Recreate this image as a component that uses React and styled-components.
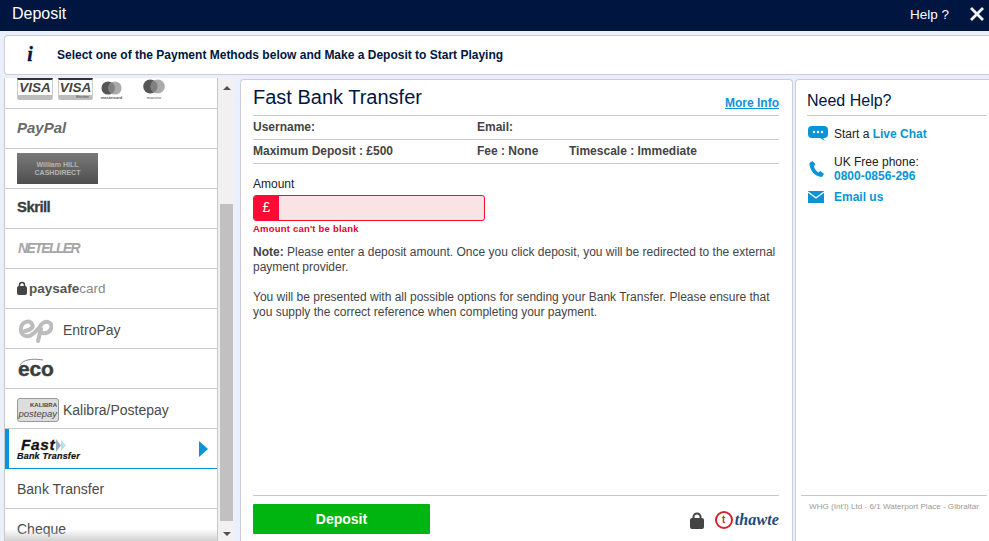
import React from 'react';
import styled, { createGlobalStyle } from 'styled-components';

const Global = createGlobalStyle`
  html, body { margin: 0; padding: 0; background: #eaf0fb; }
  body { font-family: "Liberation Sans", Arial, sans-serif; }
  * { box-sizing: border-box; }
`;

const Page = styled.div`
  width: 989px; height: 541px; overflow: hidden;
  display: flex; flex-direction: column; background: #eaf0fb;
`;
const Header = styled.header`
  height: 31px; flex: none; background: #001641; color: #fff;
  display: flex; align-items: center; justify-content: space-between;
  padding: 0 4px 3px 12px;
`;
const HeaderTitle = styled.div` font-size: 16px; `;
const HeaderRight = styled.div` display: flex; align-items: center; gap: 20px; `;
const HelpLink = styled.span` font-size: 13.5px; `;
const InfoBar = styled.div`
  height: 40px; flex: none; margin: 4px 0 3px 4px; background: #fff;
  border: 1px solid #ccd; border-right: none; border-radius: 4px 0 0 4px;
  display: flex; align-items: center; color: #001641;
  font-size: 12px; font-weight: bold; padding-bottom: 1px;
`;
const InfoIcon = styled.span`
  width: 52px; padding-right: 2px; text-align: center; font-family: "Liberation Serif", serif;
  font-style: italic; font-size: 20px; font-weight: bold; -webkit-text-stroke: .4px #001641;
`;
const Columns = styled.div`
  flex: 1; min-height: 0; display: flex; padding-left: 4px;
`;
const Sidebar = styled.div`
  width: 230px; height: 463px; flex: none; position: relative; display: flex; overflow: hidden;
`;
const List = styled.div`
  width: 214px; flex: none; background: #fff; border: 1px solid #c8c8c8;
  border-width: 0 1px 0 1px; overflow: hidden;
`;
const Row = styled.div`
  height: ${p => p.$h || 40}px; display: flex; align-items: center; position: relative;
  padding-left: ${p => p.$active ? 8 : 12}px; color: #4a4a4a; font-size: 14px;
  border-bottom: 1px solid ${p => p.$active ? '#0a94d6' : '#c8c8c8'};
  border-left: ${p => p.$active ? '4px solid #0a94d6' : 'none'};
`;
const RowLabel = styled.span` margin-left: ${p => p.$ml || 0}px; margin-top: 2px; `;
const ActiveArrow = styled.span`
  position: absolute; right: 9px; top: 12px; width: 0; height: 0;
  border-left: 9px solid #0a94d6; border-top: 8px solid transparent; border-bottom: 8px solid transparent;
`;
const CardRow = styled.div` display: flex; align-items: flex-start; height: 100%; `;
const Visa = styled.span`
  position: relative; width: ${p => p.$w}px; height: 22px; margin-right: 5px; background: linear-gradient(#fff 0 15px, #bdbdbd 15px);
  border-top: 2px solid #333; border-radius: 0 0 2px 2px;
  font: italic bold 13.5px "Liberation Sans", sans-serif; color: #444; text-align: center; line-height: 15px;
  border-left: 1px solid #ccc; border-right: 1px solid #ccc;
`;
const Electron = styled.span`
  position: absolute; right: 3px; top: 15px; font: 3.5px/4px "Liberation Sans", sans-serif; color: #444;
`;
const McWrap = styled.span`
  display: flex; flex-direction: column; align-items: center; width: ${p => p.$w}px; margin: ${p => p.$mt}px 0 0 ${p => p.$ml}px;
`;
const McLabel = styled.span` font: ${p => p.$bold ? 'bold' : 'normal'} 4px/4px "Liberation Sans", sans-serif; color: #555; margin-top: ${p => p.$gap}px; `;
const PayPal = styled.span` font: italic bold 15px "Liberation Sans", sans-serif; color: #6a6a6a; margin-top: -2px; `;
const WillHill = styled.span`
  width: 81px; height: 31px; background: linear-gradient(#7a7a7a, #4e4e4e); color: #b5b5b5;
  font-size: 7px; font-weight: bold; text-align: center; padding-top: 8px; line-height: 8px;
`;
const Skrill = styled.span` font-size: 15px; font-weight: bold; color: #3c3c3c; letter-spacing: -0.6px; margin-top: -4px; -webkit-text-stroke: .3px #3c3c3c; `;
const Neteller = styled.span` font: italic bold 14px "Liberation Sans", sans-serif; color: #a5a5a5; letter-spacing: -1.6px; margin-left: 1px; margin-top: -2px; `;
const Paysafe = styled.span` font-size: 13.5px; color: #555; font-weight: bold; display: flex; align-items: center; gap: 2px; `;
const Light = styled.span` font-weight: normal; color: #888; `;
const Eco = styled.span`
  position: relative; font-size: 21px; line-height: 20px; font-weight: bold; color: #3c3c3c; letter-spacing: -0.2px; margin-left: 1px; margin-top: 1px;
  -webkit-text-stroke: .4px #3c3c3c;
`;
const EcoSwoosh = styled.svg` position: absolute; left: 1px; top: -1px; `;
const Kalibra = styled.span`
  width: 42px; height: 24px; border: 1px solid #999; border-radius: 3px; background: #ddd; color: #444; margin-top: 2px;
  font-size: 6px; font-weight: bold; line-height: 7px; display: flex; flex-direction: column; align-items: flex-end; padding: 3px 1px 0 0;
`;
const KalibraSub = styled.i` font-size: 9.5px; font-weight: normal; line-height: 9px; `;
const FastLogo = styled.span` display: flex; flex-direction: column; color: #111; font-style: italic; font-weight: bold; margin-top: 2px; `;
const FastTop = styled.span`
  font-size: 15.5px; line-height: 14px; letter-spacing: 0.6px; display: flex; align-items: center; gap: 0; margin-left: 4px;
  -webkit-text-stroke: .3px #111;
`;
const FastSub = styled.span` font-size: 9px; line-height: 9px; letter-spacing: 0.2px; -webkit-text-stroke: .2px #111; `;
const Track = styled.div`
  width: 16px; flex: none; background: #f1f1f1; position: relative;
`;
const Thumb = styled.div`
  position: absolute; left: 2px; top: 126px; width: 13px; height: 317px; background: #c1c1c1;
`;
const ArrowUp = styled.span`
  position: absolute; left: 5px; top: 8px; width: 0; height: 0;
  border: 4px solid transparent; border-top: 0; border-bottom: 4px solid #505050;
`;
const ArrowDown = styled.span`
  position: absolute; left: 5px; bottom: 5px; width: 0; height: 0;
  border: 4px solid transparent; border-bottom: 0; border-top: 4px solid #505050;
`;
const BottomFade = styled.div`
  position: absolute; left: 1px; width: 212px; bottom: 0; height: 12px;
  background: linear-gradient(rgba(200,200,200,0), rgba(200,200,200,.85));
`;
const Main = styled.main`
  width: 553px; height: 463px; margin: 1px 0 0 6px; flex: none; background: #fff; border: 1px solid #ccd;
  border-bottom: none; border-radius: 4px 4px 0 0; padding: 0 13px 0 12px; display: flex; flex-direction: column;
  color: #333;
`;
const TitleRow = styled.div`
  height: 36px; flex: none; display: flex; justify-content: space-between; border-bottom: 1px solid #c8c8c8;
`;
const Title = styled.h1`
  margin: 5px 0 0; font-size: 20px; font-weight: normal; color: #001641; line-height: 24px;
`;
const MoreInfo = styled.a`
  margin-top: 16px; font-size: 12px; font-weight: bold; color: #0a94d6; text-decoration: underline;
`;
const InfoRow = styled.div`
  height: 24px; flex: none; display: flex; align-items: center; border-bottom: 1px solid #c8c8c8;
  font-size: 12px; font-weight: bold; color: #444; padding-bottom: 1px;
`;
const Cell = styled.span` width: ${p => p.$w}px; flex: none; `;
const AmountLabel = styled.label` margin-top: 13px; font-size: 12px; color: #222; line-height: 14px; `;
const AmountField = styled.div`
  margin-top: 4px; width: 232px; height: 26px; border: 1px solid #ff0a35; border-radius: 3px;
  background: #fae3e5; display: flex; overflow: hidden;
`;
const Currency = styled.span`
  width: 25px; background: #ff0a35; color: #fff; font-size: 14px; text-align: center; line-height: 22px;
`;
const ErrorText = styled.div` margin-top: 2px; font-size: 9.5px; font-weight: bold; color: #e8002d; letter-spacing: .2px; line-height: 12px; `;
const Copy = styled.p`
  margin: ${p => p.$mt}px 0 0; font-size: 12px; line-height: 15px; color: #444;
`;
const Spacer = styled.div` flex: 1; `;
const Footer = styled.div`
  height: 47px; flex: none; border-top: 1px solid #c8c8c8; display: flex; align-items: flex-start; justify-content: space-between;
  padding-top: 8px;
`;
const DepositBtn = styled.button`
  width: 177px; height: 30px; border: none; background: #00b50f; color: #fff; border-radius: 1px;
  font: bold 14px "Liberation Sans", sans-serif;
`;
const Secure = styled.div` display: flex; align-items: center; margin-top: 7px; gap: 11px; `;
const Thawte = styled.span` display: flex; align-items: center; gap: 2px; font: italic bold 16px "Liberation Serif", serif; color: #1c4a80; letter-spacing: 0.1px; `;
const ThawteMark = styled.span`
  width: 18px; height: 18px; border-radius: 50%; border: 2.5px solid #d8232f; color: #d8232f;
  font: bold 10px "Liberation Sans", sans-serif; text-align: center; line-height: 13px;
`;
const Help = styled.aside`
  width: 195px; height: 463px; margin: 1px 0 0 2px; flex: none; background: #fff; border: 1px solid #ccd;
  border-width: 1px 0 0 1px; border-radius: 4px 0 0 0; padding: 0 3px 0 11px; display: flex; flex-direction: column;
`;
const HelpTitle = styled.h2`
  margin: 0; height: 36px; flex: none; font-size: 16px; font-weight: normal; color: #001641; padding-top: 11px; line-height: 20px;
  border-bottom: 1px solid #c8c8c8;
`;
const HelpRow = styled.div`
  display: flex; align-items: center; margin-top: ${p => p.$mt}px; font-size: 12px; color: #222; line-height: 14px;
`;
const HelpIcon = styled.span` width: 27px; flex: none; display: flex; align-items: center; padding-left: 1px; `;
const Blue = styled.span` color: #0a94d6; font-weight: bold; `;
const Legal = styled.div`
  margin-left: -6px; border-top: 1px solid #c8c8c8; padding: 6px 0 0 8px; font-size: 8.1px; color: #999; margin-bottom: 31px; white-space: nowrap;
`;

const Mc = ({ w, h }) => (
  <svg width={w} height={h} viewBox="0 0 24 16">
    <circle cx="8" cy="8" r="7.5" fill="#555" />
    <circle cx="16" cy="8" r="7.5" fill="#aaa" />
    <path d="M12 1.500a7.500 7.500 0 0 1 0 13a7.500 7.500 0 0 1 0-13z" fill="#808080" />
  </svg>
);

export default function App() {
  return (
    <Page>
      <Global />
      <Header>
        <HeaderTitle>Deposit</HeaderTitle>
        <HeaderRight>
          <HelpLink>Help ?</HelpLink>
          <svg width="16" height="16" viewBox="0 0 16 16"><path d="M2 2l12 12M14 2L2 14" stroke="#f3f3f3" strokeWidth="2.8" /></svg>
        </HeaderRight>
      </Header>
      <InfoBar>
        <InfoIcon>i</InfoIcon>
        Select one of the Payment Methods below and Make a Deposit to Start Playing
      </InfoBar>
      <Columns>
        <Sidebar>
          <List>
            <Row $h={31}>
              <CardRow>
                <Visa $w={36}>VISA</Visa>
                <Visa $w={35}>VISA<Electron>Electron</Electron></Visa>
                <McWrap $w={23} $mt={3} $ml={2}><Mc w={23} h={14} /><McLabel $bold $gap={1}>mastercard</McLabel></McWrap>
                <McWrap $w={24} $mt={1} $ml={19}><Mc w={24} h={15} /><McLabel $gap={2}>maestro</McLabel></McWrap>
              </CardRow>
            </Row>
            <Row><PayPal>PayPal</PayPal></Row>
            <Row><WillHill>William HILL<br />CASHDIRECT</WillHill></Row>
            <Row><Skrill>Skrill</Skrill></Row>
            <Row><Neteller>NETELLER</Neteller></Row>
            <Row>
              <Paysafe>
                <svg width="10" height="15" viewBox="0 0 10 15"><path d="M2.500 6V4a2.500 2.500 0 0 1 5 0v2" fill="none" stroke="#444" strokeWidth="1.5" /><rect y="5" width="10" height="9" rx="2" fill="#444" /></svg>
                <span>paysafe<Light>card</Light></span>
              </Paysafe>
            </Row>
            <Row>
              <svg width="36" height="26" viewBox="0 0 36 26" style={{ marginTop: 3 }}>
                <path d="M8 14C14 13 17 10 15 7C13 3 5 4 4 11C3 17 7 20 12 19C16 18 19 14 22 11C24 6 29 3 33 6C36 9 34 15 29 16C26 17 24 15 23 14M21 24L24 12" fill="none" stroke="#bcbcbc" strokeWidth="4" strokeLinecap="round" />
              </svg>
              <RowLabel $ml={10}>EntroPay</RowLabel>
            </Row>
            <Row>
              <Eco>eco
                <EcoSwoosh width="26" height="8" viewBox="0 0 26 8"><path d="M1 7C4 2 12 0 24 2" fill="none" stroke="#888" strokeWidth="1" /></EcoSwoosh>
              </Eco>
            </Row>
            <Row>
              <Kalibra>KALIBRA<KalibraSub>postepay</KalibraSub></Kalibra>
              <RowLabel $ml={4}>Kalibra/Postepay</RowLabel>
            </Row>
            <Row $active>
              <FastLogo>
                <FastTop>Fast<svg width="12" height="13" viewBox="0 0 12 13"><path d="M1 0l5 6.500-5 6.500z" fill="#9ab" /><path d="M6 1l5 5.500-5 5.500z" fill="#bde" /></svg></FastTop>
                <FastSub>Bank Transfer</FastSub>
              </FastLogo>
              <ActiveArrow />
            </Row>
            <Row>Bank Transfer</Row>
            <Row>Cheque</Row>
          </List>
          <Track>
            <ArrowUp />
            <Thumb />
            <ArrowDown />
          </Track>
          <BottomFade />
        </Sidebar>
        <Main>
          <TitleRow>
            <Title>Fast Bank Transfer</Title>
            <MoreInfo>More Info</MoreInfo>
          </TitleRow>
          <InfoRow><Cell $w={224}>Username:</Cell><Cell $w={92}>Email:</Cell></InfoRow>
          <InfoRow><Cell $w={224}>Maximum Deposit : £500</Cell><Cell $w={92}>Fee : None</Cell><Cell $w={150}>Timescale : Immediate</Cell></InfoRow>
          <AmountLabel>Amount</AmountLabel>
          <AmountField><Currency>£</Currency></AmountField>
          <ErrorText>Amount can't be blank</ErrorText>
          <Copy $mt={10}><b>Note:</b> Please enter a deposit amount. Once you click deposit, you will be redirected to the external payment provider.</Copy>
          <Copy $mt={15}>You will be presented with all possible options for sending your Bank Transfer. Please ensure that you supply the correct reference when completing your payment.</Copy>
          <Spacer />
          <Footer>
            <DepositBtn>Deposit</DepositBtn>
            <Secure>
              <svg width="14" height="17" viewBox="0 0 14 17"><path d="M3.500 8V5a3.500 3.500 0 0 1 7 0v3" fill="none" stroke="#444" strokeWidth="2" /><rect y="6" width="14" height="11" rx="2" fill="#444" /></svg>
              <Thawte><ThawteMark>t</ThawteMark>thawte</Thawte>
            </Secure>
          </Footer>
        </Main>
        <Help>
          <HelpTitle>Need Help?</HelpTitle>
          <HelpRow $mt={10}>
            <HelpIcon>
              <svg width="20" height="15" viewBox="0 0 20 15"><path d="M4 0h12a4 4 0 0 1 4 4v4a4 4 0 0 1-4 4h-1l2 3-5-3H4a4 4 0 0 1-4-4V4a4 4 0 0 1 4-4z" fill="#0a94d6" /><circle cx="6" cy="6" r="1.200" fill="#fff" /><circle cx="10" cy="6" r="1.200" fill="#fff" /><circle cx="14" cy="6" r="1.200" fill="#fff" /></svg>
            </HelpIcon>
            <span>Start a <Blue>Live Chat</Blue></span>
          </HelpRow>
          <HelpRow $mt={14}>
            <HelpIcon>
              <svg width="17" height="18" viewBox="0 0 17 18"><path d="M4.500 1L1.500 3C1 8 6 17 14 17l2-3-3.500-3-2 1.500C8 11 6 8 6 6l1.500-1.500z" fill="#0a94d6" /></svg>
            </HelpIcon>
            <span>UK Free phone:<br /><Blue>0800-0856-296</Blue></span>
          </HelpRow>
          <HelpRow $mt={7}>
            <HelpIcon>
              <svg width="16" height="12" viewBox="0 0 16 12"><path d="M0 0h16v12H0z" fill="#0a94d6" /><path d="M0 1l8 6 8-6" fill="none" stroke="#fff" strokeWidth="1.300" /></svg>
            </HelpIcon>
            <Blue>Email us</Blue>
          </HelpRow>
          <Spacer />
          <Legal>WHG (Int'l) Ltd - 6/1 Waterport Place - Gibraltar</Legal>
        </Help>
      </Columns>
    </Page>
  );
}
